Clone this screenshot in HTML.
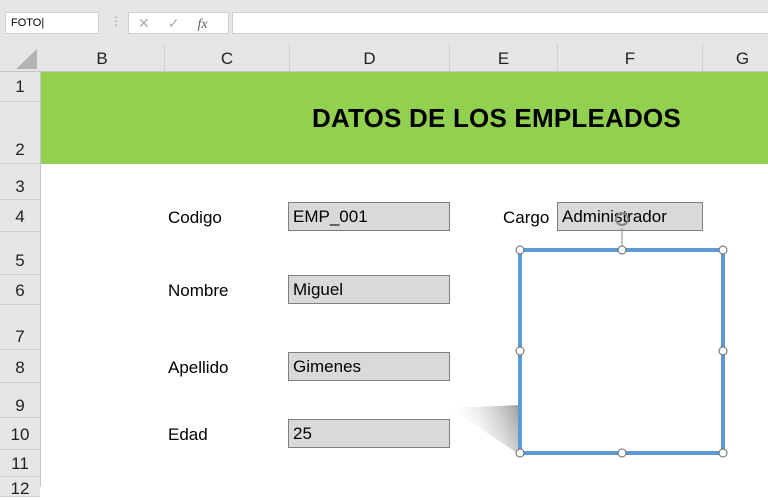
<!DOCTYPE html><html><head><style>
body{margin:0;width:768px;height:487px;overflow:hidden;background:#fff;font-family:"Liberation Sans",sans-serif;position:relative}
.a{position:absolute}
.top{left:0;top:0;width:768px;height:44px;background:#e6e6e6}
.ch{top:44px;height:28px;background:#e6e6e6;border-right:1px solid #d0d0d0;box-sizing:border-box;text-align:center;line-height:30px;font-size:17px;color:#222}
.rh{left:0;width:40px;background:#e6e6e6;border-bottom:1px solid #d0d0d0;box-sizing:border-box;font-size:17px;color:#222;text-align:center}
.lbl{font-size:17px;color:#000}
.box{background:#d9d9d9;border:1px solid #7f7f7f;box-sizing:border-box;font-size:17px;line-height:28px;padding-left:4px}
</style></head><body>
<div class="a top"></div>
<div class="a" style="left:5px;top:12px;width:94px;height:22px;background:#fff;border:1px solid #d0d0d0;box-sizing:border-box;font-size:11px;line-height:20px;padding-left:5px">FOTO|</div>
<div class="a" style="left:110px;top:14px;color:#999;font-size:12px">⋮</div>
<div class="a" style="left:128px;top:12px;width:101px;height:22px;background:#fff;border:1px solid #d0d0d0;box-sizing:border-box;color:#aaa;font-size:14px;line-height:20px"><span style="margin-left:9px">✕</span><span style="margin-left:18px">✓</span><i style="margin-left:18px;font-family:'Liberation Serif';color:#666">fx</i></div>
<div class="a" style="left:232px;top:12px;width:540px;height:22px;background:#fff;border:1px solid #d0d0d0;box-sizing:border-box"></div>
<div class="a" style="left:0;top:44px;width:40px;height:28px;background:#e6e6e6"></div>
<svg class="a" style="left:14px;top:48px" width="24" height="22"><polygon points="23,1 23,21 2,21" fill="#b4b4b4"/></svg>
<div class="a ch" style="left:40px;width:125px">B</div>
<div class="a ch" style="left:165px;width:125px">C</div>
<div class="a ch" style="left:290px;width:160px">D</div>
<div class="a ch" style="left:450px;width:108px">E</div>
<div class="a ch" style="left:558px;width:145px">F</div>
<div class="a ch" style="left:703px;width:80px">G</div>
<div class="a" style="left:0;top:71px;width:768px;height:1px;background:#c6c6c6"></div>
<div class="a" style="left:40px;top:72px;width:728px;height:92px;background:#92d050"></div>
<div class="a" style="left:312px;top:103px;font-size:26px;font-weight:bold;letter-spacing:0.2px">DATOS DE LOS EMPLEADOS</div>
<div class="a rh" style="top:72px;height:30px;line-height:30px">1</div>
<div class="a rh" style="top:102px;height:62px;line-height:96px">2</div>
<div class="a rh" style="top:164px;height:36px;line-height:46px">3</div>
<div class="a rh" style="top:200px;height:32px;line-height:34px">4</div>
<div class="a rh" style="top:232px;height:43px;line-height:58px">5</div>
<div class="a rh" style="top:275px;height:30px;line-height:32px">6</div>
<div class="a rh" style="top:305px;height:45px;line-height:64px">7</div>
<div class="a rh" style="top:350px;height:33px;line-height:36px">8</div>
<div class="a rh" style="top:383px;height:35px;line-height:46px">9</div>
<div class="a rh" style="top:418px;height:32px;line-height:34px">10</div>
<div class="a rh" style="top:450px;height:27px;line-height:28px">11</div>
<div class="a rh" style="top:477px;height:20px;line-height:24px">12</div>
<div class="a" style="left:40px;top:72px;width:1px;height:415px;background:#c6c6c6"></div>
<div class="a lbl" style="left:168px;top:208px">Codigo</div>
<div class="a lbl" style="left:168px;top:281px">Nombre</div>
<div class="a lbl" style="left:168px;top:358px">Apellido</div>
<div class="a lbl" style="left:168px;top:425px">Edad</div>
<div class="a lbl" style="left:503px;top:208px">Cargo</div>
<div class="a box" style="left:288px;top:202px;width:162px;height:29px">EMP_001</div>
<div class="a box" style="left:288px;top:275px;width:162px;height:29px">Miguel</div>
<div class="a box" style="left:288px;top:352px;width:162px;height:29px">Gimenes</div>
<div class="a box" style="left:288px;top:419px;width:162px;height:29px">25</div>
<div class="a box" style="left:557px;top:202px;width:146px;height:29px">Administrador</div>
<svg class="a" style="left:440px;top:200px" width="328" height="287">
<defs><linearGradient id="g" x1="1" y1="0" x2="0" y2="0.3"><stop offset="0" stop-color="#999"/><stop offset="1" stop-color="#fff" stop-opacity="0"/></linearGradient></defs>
<polygon points="80,205 10,208 80,255" fill="url(#g)"/>
<rect x="80" y="50" width="203" height="203" fill="#fff" stroke="#5b9bd5" stroke-width="4"/>
<line x1="182" y1="28" x2="182" y2="50" stroke="#888"/>
<circle cx="182" cy="19" r="6" fill="none" stroke="#888" stroke-width="2"/>
<g fill="#fff" stroke="#666"><circle cx="80" cy="50" r="4"/><circle cx="182" cy="50" r="4"/><circle cx="283" cy="50" r="4"/><circle cx="80" cy="151" r="4"/><circle cx="283" cy="151" r="4"/><circle cx="80" cy="253" r="4"/><circle cx="182" cy="253" r="4"/><circle cx="283" cy="253" r="4"/></g>
</svg>
</body></html>
